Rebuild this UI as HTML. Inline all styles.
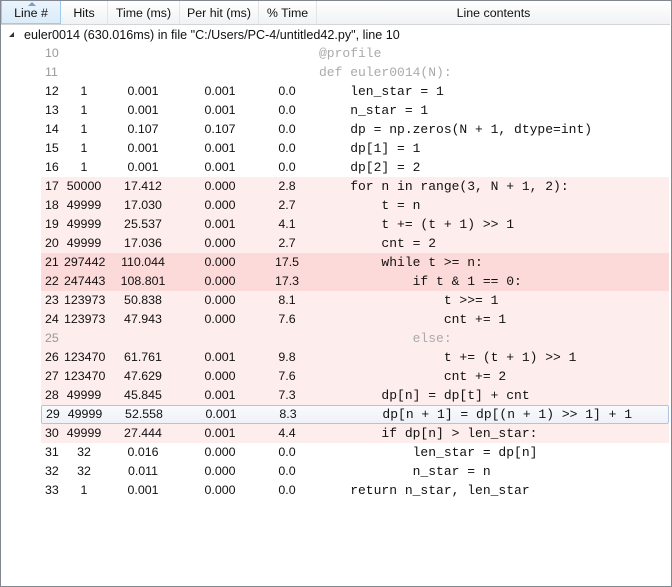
<!DOCTYPE html>
<html><head><meta charset="utf-8"><style>
*{margin:0;padding:0;box-sizing:border-box}
body{width:672px;height:587px;background:#fff;position:relative;overflow:hidden;font-family:"Liberation Sans","Noto Sans CJK SC",sans-serif;font-size:12.4px;color:#111}
#frame{position:absolute;left:0;top:0;width:672px;height:587px;border:1px solid #828790}
#hdr{position:absolute;left:1px;top:1px;width:669px;height:24px;background:linear-gradient(#fff,#f1f2f4);border-bottom:1px solid #d5d5d5}
.h{position:absolute;top:0;height:23px;line-height:24px;text-align:center;border-right:1px solid #e3e4e6;color:#111}
#t{position:absolute;left:24px;top:26px;height:18px;line-height:18px;font-size:12.6px}
#tri{position:absolute;left:9px;top:32px;width:0;height:0;border-left:5px solid transparent;border-bottom:5px solid #333}
.r{position:absolute;left:41px;width:628px;height:19px}
.c{position:absolute;top:0;height:19px;line-height:19px;white-space:pre}
.ln{left:4px}
.hi{left:23px;width:40px;text-align:center}
.tm{left:72px;width:60px;text-align:center}
.ph{left:149px;width:60px;text-align:center}
.pc{left:226px;width:40px;text-align:center}
.cd{left:278px;font-family:"Liberation Mono",monospace;font-size:13px;color:#111}
.g{color:#999}
.g .cd{color:#aaa}
.p1{background:#feeded}
.p2{background:#fddada}
.sel{background:linear-gradient(#f9fafd,#eef1f7);border:1px solid #a9c6ea;border-radius:2px}
.sel .c{top:-1px}
</style></head><body>
<div id="frame"></div>
<div id="hdr">
<div class="h" style="left:0;width:60px;background:linear-gradient(#eaf4fc,#dbecf9);border:1px solid #9ccbee;border-top:none">Line #<div style="position:absolute;left:26px;top:1px;width:0;height:0;border-left:4px solid transparent;border-right:4px solid transparent;border-bottom:4px solid #7aa0c8"></div></div>
<div class="h" style="left:60px;width:47px">Hits</div>
<div class="h" style="left:107px;width:72px">Time (ms)</div>
<div class="h" style="left:179px;width:79px">Per hit (ms)</div>
<div class="h" style="left:258px;width:58px">% Time</div>
<div class="h" style="left:316px;width:353px;border-right:none">Line contents</div>
</div>
<div id="tri"></div>
<div id="t">euler0014 (630.016ms) in file "C:/Users/PC-4/untitled42.py", line 10</div>

<div class="r g" style="top:44px"><span class="c ln">10</span><span class="c cd">@profile</span></div>
<div class="r g" style="top:63px"><span class="c ln">11</span><span class="c cd">def euler0014(N):</span></div>
<div class="r" style="top:82px"><span class="c ln">12</span><span class="c hi">1</span><span class="c tm">0.001</span><span class="c ph">0.001</span><span class="c pc">0.0</span><span class="c cd">    len_star = 1</span></div>
<div class="r" style="top:101px"><span class="c ln">13</span><span class="c hi">1</span><span class="c tm">0.001</span><span class="c ph">0.001</span><span class="c pc">0.0</span><span class="c cd">    n_star = 1</span></div>
<div class="r" style="top:120px"><span class="c ln">14</span><span class="c hi">1</span><span class="c tm">0.107</span><span class="c ph">0.107</span><span class="c pc">0.0</span><span class="c cd">    dp = np.zeros(N + 1, dtype=int)</span></div>
<div class="r" style="top:139px"><span class="c ln">15</span><span class="c hi">1</span><span class="c tm">0.001</span><span class="c ph">0.001</span><span class="c pc">0.0</span><span class="c cd">    dp[1] = 1</span></div>
<div class="r" style="top:158px"><span class="c ln">16</span><span class="c hi">1</span><span class="c tm">0.001</span><span class="c ph">0.001</span><span class="c pc">0.0</span><span class="c cd">    dp[2] = 2</span></div>
<div class="r p1" style="top:177px"><span class="c ln">17</span><span class="c hi">50000</span><span class="c tm">17.412</span><span class="c ph">0.000</span><span class="c pc">2.8</span><span class="c cd">    for n in range(3, N + 1, 2):</span></div>
<div class="r p1" style="top:196px"><span class="c ln">18</span><span class="c hi">49999</span><span class="c tm">17.030</span><span class="c ph">0.000</span><span class="c pc">2.7</span><span class="c cd">        t = n</span></div>
<div class="r p1" style="top:215px"><span class="c ln">19</span><span class="c hi">49999</span><span class="c tm">25.537</span><span class="c ph">0.001</span><span class="c pc">4.1</span><span class="c cd">        t += (t + 1) &gt;&gt; 1</span></div>
<div class="r p1" style="top:234px"><span class="c ln">20</span><span class="c hi">49999</span><span class="c tm">17.036</span><span class="c ph">0.000</span><span class="c pc">2.7</span><span class="c cd">        cnt = 2</span></div>
<div class="r p2" style="top:253px"><span class="c ln">21</span><span class="c hi">297442</span><span class="c tm">110.044</span><span class="c ph">0.000</span><span class="c pc">17.5</span><span class="c cd">        while t &gt;= n:</span></div>
<div class="r p2" style="top:272px"><span class="c ln">22</span><span class="c hi">247443</span><span class="c tm">108.801</span><span class="c ph">0.000</span><span class="c pc">17.3</span><span class="c cd">            if t &amp; 1 == 0:</span></div>
<div class="r p1" style="top:291px"><span class="c ln">23</span><span class="c hi">123973</span><span class="c tm">50.838</span><span class="c ph">0.000</span><span class="c pc">8.1</span><span class="c cd">                t &gt;&gt;= 1</span></div>
<div class="r p1" style="top:310px"><span class="c ln">24</span><span class="c hi">123973</span><span class="c tm">47.943</span><span class="c ph">0.000</span><span class="c pc">7.6</span><span class="c cd">                cnt += 1</span></div>
<div class="r p1 g" style="top:329px"><span class="c ln">25</span><span class="c cd">            else:</span></div>
<div class="r p1" style="top:348px"><span class="c ln">26</span><span class="c hi">123470</span><span class="c tm">61.761</span><span class="c ph">0.001</span><span class="c pc">9.8</span><span class="c cd">                t += (t + 1) &gt;&gt; 1</span></div>
<div class="r p1" style="top:367px"><span class="c ln">27</span><span class="c hi">123470</span><span class="c tm">47.629</span><span class="c ph">0.000</span><span class="c pc">7.6</span><span class="c cd">                cnt += 2</span></div>
<div class="r p1" style="top:386px"><span class="c ln">28</span><span class="c hi">49999</span><span class="c tm">45.845</span><span class="c ph">0.001</span><span class="c pc">7.3</span><span class="c cd">        dp[n] = dp[t] + cnt</span></div>
<div class="r sel" style="top:405px"><span class="c ln">29</span><span class="c hi">49999</span><span class="c tm">52.558</span><span class="c ph">0.001</span><span class="c pc">8.3</span><span class="c cd">        dp[n + 1] = dp[(n + 1) &gt;&gt; 1] + 1</span></div>
<div class="r p1" style="top:424px"><span class="c ln">30</span><span class="c hi">49999</span><span class="c tm">27.444</span><span class="c ph">0.001</span><span class="c pc">4.4</span><span class="c cd">        if dp[n] &gt; len_star:</span></div>
<div class="r" style="top:443px"><span class="c ln">31</span><span class="c hi">32</span><span class="c tm">0.016</span><span class="c ph">0.000</span><span class="c pc">0.0</span><span class="c cd">            len_star = dp[n]</span></div>
<div class="r" style="top:462px"><span class="c ln">32</span><span class="c hi">32</span><span class="c tm">0.011</span><span class="c ph">0.000</span><span class="c pc">0.0</span><span class="c cd">            n_star = n</span></div>
<div class="r" style="top:481px"><span class="c ln">33</span><span class="c hi">1</span><span class="c tm">0.001</span><span class="c ph">0.000</span><span class="c pc">0.0</span><span class="c cd">    return n_star, len_star</span></div>
</body></html>
